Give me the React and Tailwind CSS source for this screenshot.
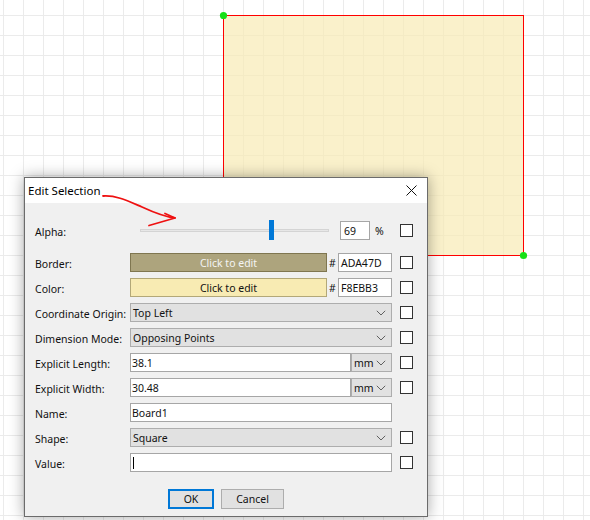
import React from "react";

function Checkbox() {
  return <div className="w-[13px] h-[13px] border border-[#333333] bg-white shrink-0" />;
}

function Chevron() {
  return (
    <svg width="10" height="6" viewBox="0 0 10 6" className="shrink-0">
      <polyline points="0.8,0.8 5,5 9.2,0.8" fill="none" stroke="#606060" strokeWidth="1" />
    </svg>
  );
}

function Row({ label, children, check = true }) {
  return (
    <div className="flex items-center h-[19px]">
      <div className="w-[95px] shrink-0 whitespace-nowrap text-[10.5px] leading-none text-[#111] pt-[3px]">{label}</div>
      <div className="w-[262px] shrink-0 flex items-center h-full">{children}</div>
      <div className="w-[8px] shrink-0" />
      {check && <Checkbox />}
    </div>
  );
}

function Select({ value }) {
  return (
    <div className="flex-1 h-full flex items-center justify-between bg-[#e1e1e1] border border-[#adadad] pl-[2px] pr-[5px] text-[10.5px] leading-none whitespace-nowrap">
      <span className="pt-[1px]">{value}</span>
      <Chevron />
    </div>
  );
}

function TextInput({ value, className = "", children }) {
  return (
    <div className={"h-full flex items-center bg-white border border-[#a6a6a6] pl-[1px] text-[10.5px] leading-none whitespace-nowrap " + className}>
      <span className="pt-[1px]">{value}</span>
      {children}
    </div>
  );
}

function UnitSelect() {
  return (
    <div className="w-[41px] h-full flex items-center justify-between bg-[#e1e1e1] border border-[#adadad] pl-[2px] pr-[5px] text-[10.5px] leading-none">
      <span className="pt-[1px]">mm</span>
      <Chevron />
    </div>
  );
}

export default function App() {
  return (
    <div className="relative w-[590px] h-[520px] overflow-hidden bg-white font-['Noto_Sans',sans-serif] text-[#111]">
      <svg className="absolute left-0 top-0" width="590" height="520">
        <defs>
          <pattern id="grid" x="3" y="15" width="20" height="20" patternUnits="userSpaceOnUse">
            <rect x="0" y="0" width="20" height="1" fill="#ebebeb" />
            <rect x="0" y="0" width="1" height="20" fill="#ebebeb" />
          </pattern>
        </defs>
        <rect x="0" y="0" width="590" height="520" fill="url(#grid)" />
        <rect x="223.5" y="15.5" width="300" height="240" fill="#F8EBB3" fillOpacity="0.69" stroke="#ff0000" strokeWidth="1" />
        <circle cx="223.5" cy="15.5" r="3.6" fill="#16e016" />
        <circle cx="523.5" cy="255.5" r="3.6" fill="#16e016" />
      </svg>

      <div className="absolute left-[24px] top-[177px] w-[404px] border border-[#6b6b6b] bg-[#f0f0f0] shadow-[0_0_14px_rgba(0,0,0,0.35)]">
        <div className="h-[25px] bg-white flex items-center justify-between pl-[3px] pr-[10px]">
          <span className="text-[11.5px] leading-none text-black pt-[1px]">Edit Selection</span>
          <svg width="11" height="11" viewBox="0 0 11 11">
            <line x1="0.5" y1="0.5" x2="10.5" y2="10.5" stroke="#111" strokeWidth="1" />
            <line x1="10.5" y1="0.5" x2="0.5" y2="10.5" stroke="#111" strokeWidth="1" />
          </svg>
        </div>

        <div className="flex flex-col pl-[10px] pt-[18px] pb-[7px]">
          <Row label="Alpha:">
            <div className="relative w-[210px] h-full flex items-center shrink-0">
              <div className="ml-[10px] w-[189px] h-[3px] bg-[#e7e7e7] border border-[#d4d4d4]" />
              <div className="absolute left-[139px] top-[-1px] w-[5px] h-[20px] bg-[#0078d7]" />
            </div>
            <TextInput value="69" className="w-[30px] pl-[3px]" />
            <span className="ml-[5px] text-[10.5px] leading-none pt-[2px]">%</span>
          </Row>

          <div className="flex flex-col gap-[6px] mt-[13px]">
            <Row label="Border:">
              <div className="w-[197px] h-full flex items-center justify-center bg-[#ADA47D] border border-[#7f7650] text-[10.5px] leading-none text-[#f4f4f4] pt-[1px]">
                Click to edit
              </div>
              <span className="w-[11px] text-center text-[10.5px] leading-none pt-[1px]">#</span>
              <TextInput value="ADA47D" className="w-[54px] pl-[2px]" />
            </Row>
            <Row label="Color:">
              <div className="w-[197px] h-full flex items-center justify-center bg-[#F8EBB3] border border-[#b3a878] text-[10.5px] leading-none text-[#111] pt-[1px]">
                Click to edit
              </div>
              <span className="w-[11px] text-center text-[10.5px] leading-none pt-[1px]">#</span>
              <TextInput value="F8EBB3" className="w-[54px] pl-[2px]" />
            </Row>
            <Row label="Coordinate Origin:">
              <Select value="Top Left" />
            </Row>
            <Row label="Dimension Mode:">
              <Select value="Opposing Points" />
            </Row>
            <Row label="Explicit Length:">
              <TextInput value="38.1" className="w-[221px]" />
              <UnitSelect />
            </Row>
            <Row label="Explicit Width:">
              <TextInput value="30.48" className="w-[221px]" />
              <UnitSelect />
            </Row>
            <Row label="Name:" check={false}>
              <TextInput value="Board1" className="flex-1" />
            </Row>
            <Row label="Shape:">
              <Select value="Square" />
            </Row>
            <Row label="Value:">
              <TextInput className="flex-1 pl-[2px]">
                <div className="w-px h-[12px] bg-black" />
              </TextInput>
            </Row>
          </div>

          <div className="flex justify-center gap-[7px] mt-[17px] pr-[10px]">
            <div className="w-[46px] h-[20px] flex items-center justify-center bg-[#e1e1e1] border-2 border-[#0078d7] text-[10.5px] leading-none pt-[1px]">
              OK
            </div>
            <div className="w-[63px] h-[20px] flex items-center justify-center bg-[#e1e1e1] border border-[#adadad] text-[10.5px] leading-none pt-[1px]">
              Cancel
            </div>
          </div>
        </div>
      </div>

      <svg className="absolute left-0 top-0 pointer-events-none" width="590" height="520">
        <path d="M103,196 C116,195 128,201 142,207 C155,213 166,217 175,218" fill="none" stroke="#ee1111" strokeWidth="1.8" strokeLinecap="round" />
        <path d="M165,213.5 L175,218 L149,225.5" fill="none" stroke="#ee1111" strokeWidth="1.8" strokeLinecap="round" strokeLinejoin="round" />
      </svg>
    </div>
  );
}
